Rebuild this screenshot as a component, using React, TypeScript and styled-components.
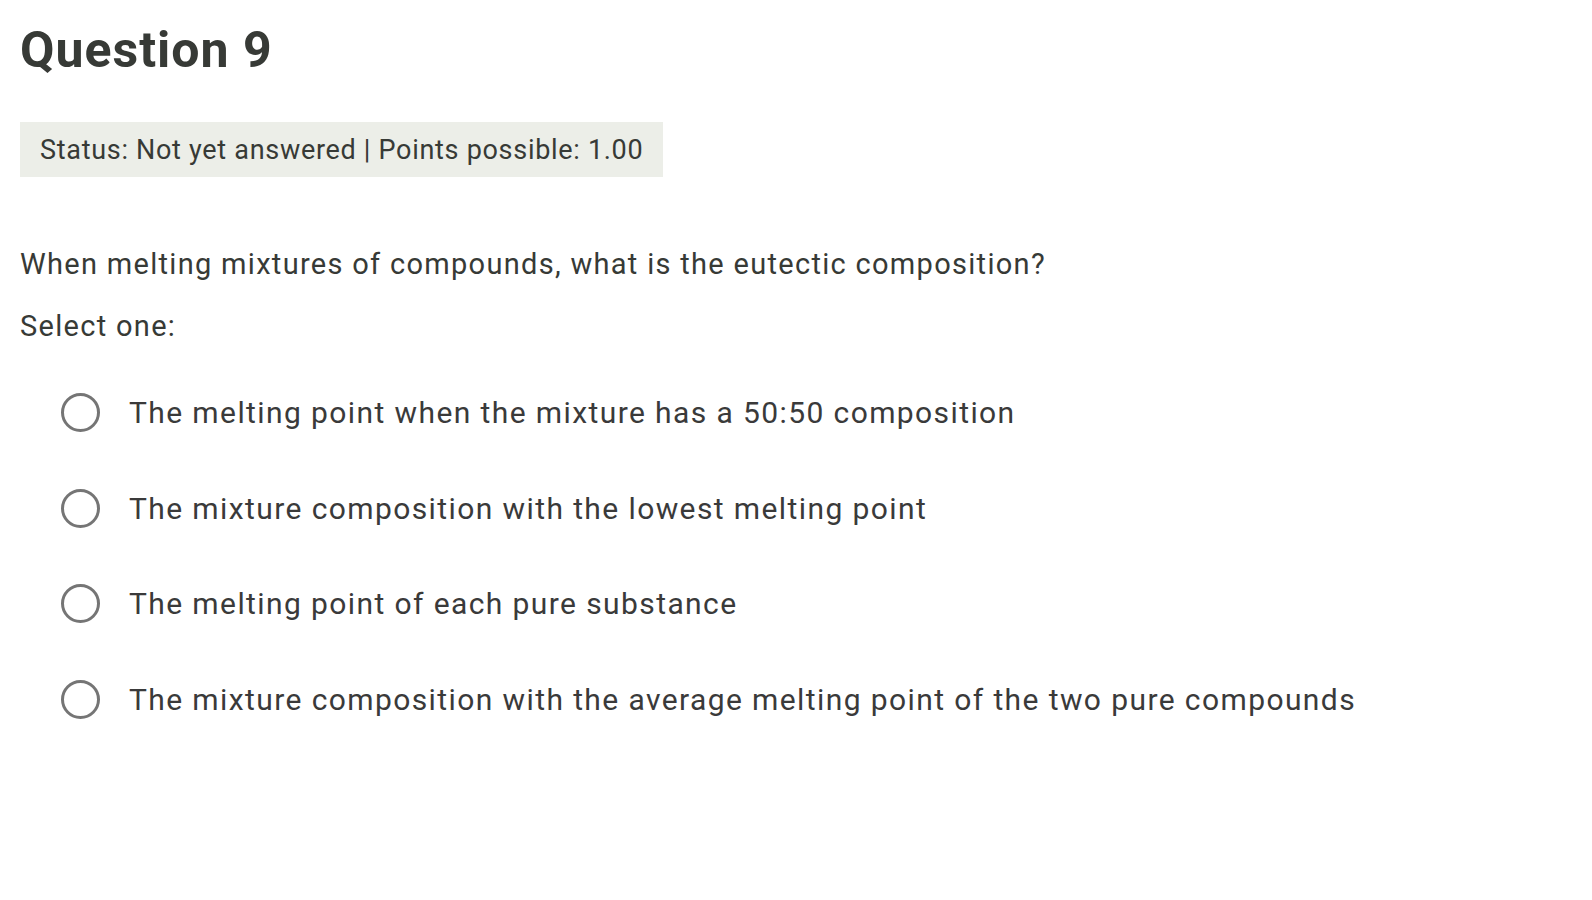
import React from "react";
import styled, { createGlobalStyle } from "styled-components";

const Global = createGlobalStyle`
  html, body { margin: 0; padding: 0; background: #ffffff; }
  body { font-family: Roboto, "Noto Sans", sans-serif; color: #373a36; }
`;

const Page = styled.main`
  padding: 22px 20px;
  display: flex;
  flex-direction: column;
  align-items: flex-start;
`;

const Title = styled.h2`
  margin: 0;
  font-size: 50px;
  font-weight: 700;
  letter-spacing: 1px;
  line-height: 56px;
  color: #373a36;
`;

const StatusBox = styled.div`
  margin-top: 44px;
  background: #eceee8;
  padding: 0 20px;
  height: 55px;
  display: flex;
  align-items: center;
  font-size: 27px;
  letter-spacing: 0.7px;
  color: #373a36;
`;

const QuestionText = styled.p`
  margin: 67px 0 0;
  font-size: 29px;
  letter-spacing: 1.3px;
  line-height: 40px;
  color: #373a36;
`;

const Prompt = styled.p`
  margin: 22px 0 0;
  font-size: 29px;
  letter-spacing: 1.3px;
  line-height: 40px;
  color: #373a36;
`;

const Options = styled.div`
  margin-top: 40px;
  display: flex;
  flex-direction: column;
  gap: 42.5px;
  padding-left: 41px;
`;

const Option = styled.label`
  display: flex;
  align-items: center;
  gap: 29px;
  height: 53px;
  font-size: 30px;
  letter-spacing: 1.4px;
  color: #3a3a3a;
  cursor: pointer;
`;

const Radio = styled.span`
  width: 33px;
  height: 33px;
  border: 3px solid #757575;
  border-radius: 50%;
  flex-shrink: 0;
`;

const options = [
  "The melting point when the mixture has a 50:50 composition",
  "The mixture composition with the lowest melting point",
  "The melting point of each pure substance",
  "The mixture composition with the average melting point of the two pure compounds",
];

export default function App() {
  return (
    <>
      <Global />
      <Page>
        <Title>Question 9</Title>
        <StatusBox>Status: Not yet answered | Points possible: 1.00</StatusBox>
        <QuestionText>When melting mixtures of compounds, what is the eutectic composition?</QuestionText>
        <Prompt>Select one:</Prompt>
        <Options>
          {options.map((o) => (
            <Option key={o}>
              <Radio />
              {o}
            </Option>
          ))}
        </Options>
      </Page>
    </>
  );
}
